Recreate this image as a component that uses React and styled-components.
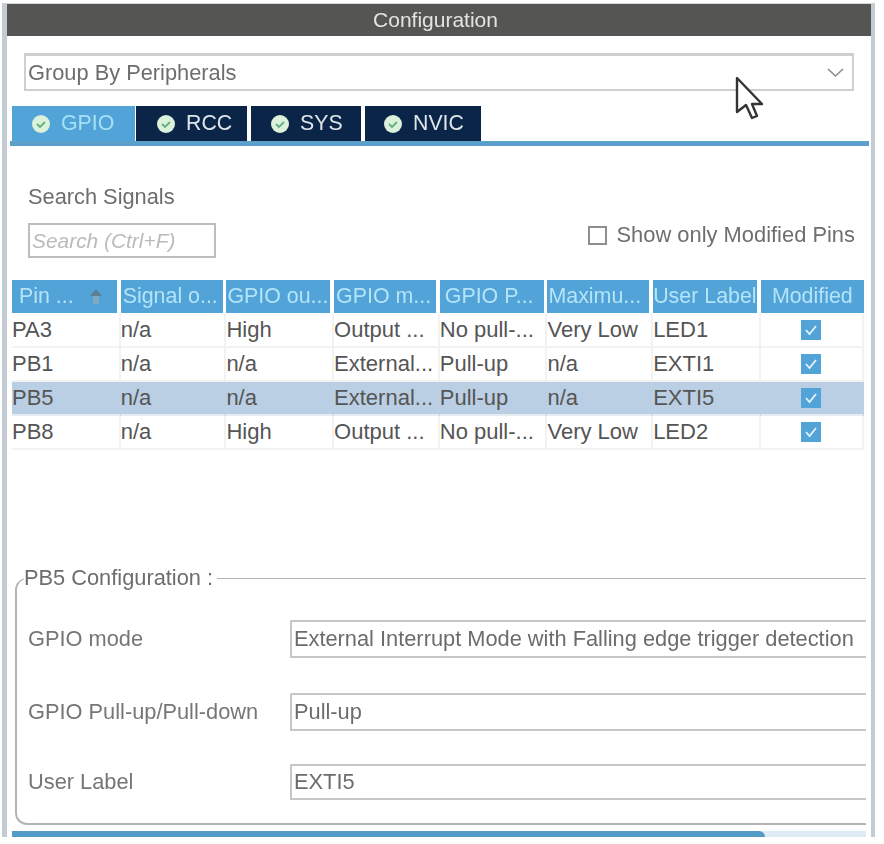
import React from 'react';
import styled, { createGlobalStyle } from 'styled-components';

const GlobalStyle = createGlobalStyle`
  html, body {
    margin: 0;
    padding: 0;
    background: #fff;
  }
  body {
    font-family: "Liberation Sans", Arial, sans-serif;
  }
`;

const Page = styled.div`
  position: relative;
  width: 884px;
  height: 844px;
  box-sizing: border-box;
  padding: 3px 9px 7px 2px;
  overflow: hidden;
  filter: blur(0.6px);
`;

// Outer frame of the configuration view
const Frame = styled.div`
  height: 100%;
  box-sizing: border-box;
  border-left: 5px solid #c3ccd3;
  border-right: 4px solid #c3ccd3;
  border-top: 1px solid #d4d8da;
  display: flex;
  flex-direction: column;
`;

const Header = styled.div`
  height: 32px;
  flex: none;
  background: #555654;
  color: #e4e4e2;
  font-size: 21px;
  display: flex;
  align-items: center;
  justify-content: center;
  padding-right: 7px;
`;

const Select = styled.div`
  height: 38px;
  flex: none;
  box-sizing: border-box;
  margin: 17px 17px 0 17px;
  border: 2px solid #cfcfcf;
  border-top-width: 3px;
  padding: 0 8px 0 2px;
  display: flex;
  align-items: center;
  justify-content: space-between;
  font-size: 21.8px;
  color: #6d6d6d;
`;

const TabBar = styled.div`
  display: flex;
  flex: none;
  margin: 15px 2px 0 3px;
  padding-left: 2px;
  border-bottom: 5px solid #5b9fcb;
  height: 35px;
`;

const Tab = styled.div`
  width: ${(p) => p.$width}px;
  margin-right: ${(p) => p.$gap}px;
  box-sizing: border-box;
  display: flex;
  align-items: center;
  padding-left: ${(p) => p.$pad}px;
  gap: 11px;
  font-size: 21.3px;
  background: ${(p) => (p.$active ? '#52a3d8' : '#0b2548')};
  color: ${(p) => (p.$active ? '#a5e0f7' : '#dfe6ea')};
`;

const SearchLabel = styled.div`
  margin: 38px 0 0 21px;
  font-size: 21.8px;
  line-height: 26px;
  color: #6d6d6d;
`;

const SearchRow = styled.div`
  display: flex;
  justify-content: space-between;
  align-items: flex-start;
  margin: 13px 16px 0 21px;
  height: 35px;
`;

const SearchInput = styled.div`
  width: 188px;
  height: 35px;
  box-sizing: border-box;
  border: 2px solid #bdbdbd;
  padding-left: 2px;
  display: flex;
  align-items: center;
  font-size: 20.9px;
  font-style: italic;
  color: #bbbbbb;
`;

const ModifiedToggle = styled.div`
  display: flex;
  align-items: center;
  gap: 10px;
  font-size: 21.9px;
  color: #6f6f6f;
  height: 24px;
`;

const Box = styled.div`
  width: 19px;
  height: 19px;
  box-sizing: border-box;
  border: 2px solid #8e8e8e;
`;

const Table = styled.div`
  margin: 22px 6px 0 5px;
  display: grid;
  grid-template-columns: 105px 102px 104px 102px 104px 102px 104px 103px;
  column-gap: 3.7px;
`;

const HeadCell = styled.div`
  height: 33px;
  margin-bottom: 1px;
  background: #52a3d8;
  color: #b3e4f8;
  font-size: 21.4px;
  display: flex;
  align-items: center;
  justify-content: ${(p) => (p.$center ? 'center' : 'space-between')};
  padding: 0 ${(p) => (p.$pad ? 14 : 0)}px 0 ${(p) => p.$left}px;
  box-sizing: border-box;
  white-space: nowrap;
  overflow: hidden;
`;

const Cell = styled.div`
  height: 34px;
  margin-right: ${(p) => (p.$last ? 0 : -3.7)}px;
  box-sizing: border-box;
  display: flex;
  align-items: center;
  justify-content: ${(p) => (p.$last ? 'center' : 'flex-start')};
  font-size: 22px;
  white-space: nowrap;
  color: #555;
  background: ${(p) => (p.$selected ? '#bacfe4' : '#fff')};
  border-bottom: 2px solid ${(p) => (p.$selected ? '#e6ecf2' : '#f1f3f3')};
  border-right: 2px solid ${(p) => (p.$selected ? '#bacfe4' : '#f1f3f3')};
`;

const Check = styled.div`
  width: 20px;
  height: 20px;
  background: #52a3d8;
  display: flex;
  align-items: center;
  justify-content: center;
`;

// The group box runs off the right side, only its top and bottom lines show
const Group = styled.fieldset`
  margin: 115px 5px 0 8px;
  padding: 0 0 0 12px;
  min-width: 0;
  height: 261px;
  box-sizing: border-box;
  border: 2px solid #b4b4b4;
  border-right: none;
  border-top-width: 1px;
  border-radius: 12px 0 0 12px;
`;

const Legend = styled.legend`
  padding: 0 4px 0 0;
  margin-left: -5px;
  font-size: 21.8px;
  color: #6d6d6d;
`;

const FormRow = styled.div`
  display: grid;
  grid-template-columns: 262px 1fr;
  align-items: center;
  margin-top: ${(p) => p.$top}px;
  margin-left: -1px;
`;

const FormLabel = styled.div`
  font-size: 21.8px;
  color: #767676;
  white-space: nowrap;
`;

const FormField = styled.div`
  height: ${(p) => p.$height}px;
  box-sizing: border-box;
  border: 2px solid #c6c6c6;
  border-right: none;
  border-top-left-radius: 2px;
  padding-left: 2px;
  display: flex;
  align-items: center;
  font-size: 21.8px;
  color: #6c6c6c;
  white-space: nowrap;
`;

const ScrollTrack = styled.div`
  flex: none;
  margin: 6px 5px 0 5px;
  height: 6px;
  background: #dfecf4;
`;

const ScrollThumb = styled.div`
  width: 753px;
  height: 100%;
  background: #539cc8;
  border-radius: 0 6px 0 0;
`;

const CursorWrap = styled.div`
  position: absolute;
  left: 735px;
  top: 76px;
  line-height: 0;
`;

const TabCheck = () => (
  <svg width="18" height="18" viewBox="0 0 18 18">
    <circle cx="9" cy="9" r="9" fill="#dcf1dc" />
    <path d="M5 9l3 3 5-5" fill="none" stroke="#62b07c" strokeWidth="1.8" />
  </svg>
);

const Chevron = () => (
  <svg width="17" height="10" viewBox="0 0 17 10">
    <path d="M1 1l7.5 7L16 1" fill="none" stroke="#8c8c8c" strokeWidth="1.6" />
  </svg>
);

const SortArrow = () => (
  <svg width="14" height="18" viewBox="0 0 14 18">
    <path d="M7 1l6 7H1z" fill="#5d7f95" />
    <rect x="4" y="8" width="6" height="8" fill="#7fa9c4" />
  </svg>
);

const CheckMark = () => (
  <svg width="14" height="12" viewBox="0 0 14 12">
    <path d="M2 6l3.5 4L12 2" fill="none" stroke="#e4f3fb" strokeWidth="1.8" />
  </svg>
);

const Cursor = () => (
  <svg width="30" height="44" viewBox="0 0 30 44">
    <path
      d="M2 2v34l9-7 6 13 5-2-5-12h10z"
      fill="#fff"
      stroke="#333"
      strokeWidth="2.4"
      strokeLinejoin="round"
    />
  </svg>
);

const tabs = [
  { name: 'GPIO', width: 123, gap: 1, pad: 20, active: true },
  { name: 'RCC', width: 111, gap: 4, pad: 21 },
  { name: 'SYS', width: 110, gap: 4, pad: 20 },
  { name: 'NVIC', width: 116, gap: 0, pad: 19 },
];

const columns = [
  { title: 'Pin ...', left: 7, pad: true, sort: true },
  { title: 'Signal o...', left: 2 },
  { title: 'GPIO ou...', left: 1 },
  { title: 'GPIO m...', left: 2 },
  { title: 'GPIO P...', left: 5 },
  { title: 'Maximu...', left: 1 },
  { title: 'User Label', left: 0 },
  { title: 'Modified', center: true },
];

const rows = [
  ['PA3', 'n/a', 'High', 'Output ...', 'No pull-...', 'Very Low', 'LED1'],
  ['PB1', 'n/a', 'n/a', 'External...', 'Pull-up', 'n/a', 'EXTI1'],
  ['PB5', 'n/a', 'n/a', 'External...', 'Pull-up', 'n/a', 'EXTI5'],
  ['PB8', 'n/a', 'High', 'Output ...', 'No pull-...', 'Very Low', 'LED2'],
];

const App = () => {
  return (
    <Page>
      <GlobalStyle />
      <Frame>
        <Header>Configuration</Header>
        <Select>
          Group By Peripherals
          <Chevron />
        </Select>
        <TabBar>
          {tabs.map((t) => (
            <Tab key={t.name} $width={t.width} $gap={t.gap} $pad={t.pad} $active={t.active}>
              <TabCheck />
              {t.name}
            </Tab>
          ))}
        </TabBar>
        <SearchLabel>Search Signals</SearchLabel>
        <SearchRow>
          <SearchInput>Search (Ctrl+F)</SearchInput>
          <ModifiedToggle>
            <Box />
            Show only Modified Pins
          </ModifiedToggle>
        </SearchRow>
        <Table>
          {columns.map((c) => (
            <HeadCell key={c.title} $left={c.left || 0} $pad={c.pad} $center={c.center}>
              {c.title}
              {c.sort && <SortArrow />}
            </HeadCell>
          ))}
          {rows.map((row) => {
            const selected = row[0] === 'PB5';
            return (
              <React.Fragment key={row[0]}>
                {row.map((value, i) => (
                  <Cell key={i} $selected={selected}>
                    {value}
                  </Cell>
                ))}
                <Cell $last $selected={selected}>
                  <Check>
                    <CheckMark />
                  </Check>
                </Cell>
              </React.Fragment>
            );
          })}
        </Table>
        <Group>
          <Legend>PB5 Configuration :</Legend>
          <FormRow $top={29}>
            <FormLabel>GPIO mode</FormLabel>
            <FormField $height={38}>External Interrupt Mode with Falling edge trigger detection</FormField>
          </FormRow>
          <FormRow $top={35}>
            <FormLabel>GPIO Pull-up/Pull-down</FormLabel>
            <FormField $height={38}>Pull-up</FormField>
          </FormRow>
          <FormRow $top={33}>
            <FormLabel>User Label</FormLabel>
            <FormField $height={36}>EXTI5</FormField>
          </FormRow>
        </Group>
        <ScrollTrack>
          <ScrollThumb />
        </ScrollTrack>
      </Frame>
      <CursorWrap>
        <Cursor />
      </CursorWrap>
    </Page>
  );
};

export default App;
